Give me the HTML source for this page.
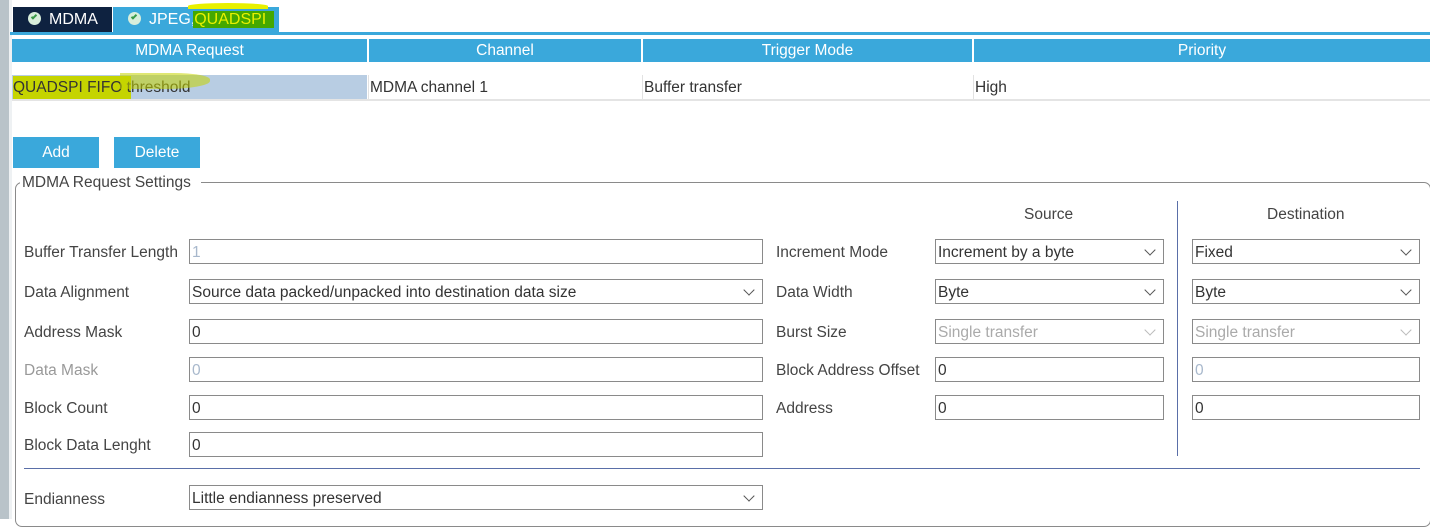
<!DOCTYPE html>
<html><head><meta charset="utf-8"><style>
*{box-sizing:border-box;margin:0;padding:0}
body{width:1430px;height:519px;overflow:hidden;background:#fff;font-family:"Liberation Sans",Arial,sans-serif;font-size:15.5px;color:#333;position:relative}
.a{position:absolute;white-space:nowrap}
.hd{position:absolute;top:39px;height:23px;background:#3aa8db;color:#fff;text-align:center;line-height:24px}
.cell{position:absolute;top:75px;height:25px;line-height:26px;padding-left:1px;border-left:1px solid #e2e2e2}
.lbl{position:absolute;color:#444;line-height:24px;margin-top:2px}
.in{position:absolute;height:25px;border:1px solid #8a8a8a;background:#fff;line-height:26px;padding-left:2px;color:#333}
.dis{color:#a8b8cc}
.sel::after{content:"";position:absolute;right:9px;top:6px;width:7px;height:7px;border-right:1px solid #555;border-bottom:1px solid #555;transform:rotate(45deg)}
.sel.d::after{border-color:#bbb}
.btn{position:absolute;top:137px;height:31px;background:#3aa8db;color:#fff;text-align:center;line-height:32px}
.ck{display:inline-block;width:13px;height:13px;border-radius:50%;background:#d8eedb;vertical-align:-1px;margin-right:8px;position:relative}
.ck span{position:absolute;left:3px;top:3px;width:6px;height:3px;border-left:2px solid #3a9a48;border-bottom:2px solid #3a9a48;transform:rotate(-45deg)}
</style></head><body>
<div class="a" style="left:0;top:0;width:9px;height:519px;background:#b9c3c9"></div>
<div class="a" style="left:9px;top:0;width:3px;height:519px;background:#eef1f3"></div>
<!-- tabs -->
<div class="a" style="left:13px;top:7px;width:99px;height:26px;background:#0e2240;color:#fff;line-height:26px;padding-left:15px;font-size:16px"><span class="ck"><span></span></span>MDMA</div>
<div class="a" style="left:113px;top:7px;width:166px;height:27px;background:#3aa8db;color:#fff;line-height:26px;padding-left:15px;font-size:16px"><span class="ck"><span></span></span>JPEG,<span style="background:#44a800;color:#e8f000;padding:0 8px 0 1px;margin-left:-2px">QUADSPI</span></div>
<div class="a" style="left:188px;top:3px;width:80px;height:6px;background:#e8f000;border-radius:50% 50% 0 0"></div>
<div class="a" style="left:10px;top:32px;width:1420px;height:3px;background:#3aa8db"></div>
<!-- header -->
<div class="hd" style="left:12px;width:355px">MDMA Request</div>
<div class="hd" style="left:369px;width:272px">Channel</div>
<div class="hd" style="left:643px;width:329px">Trigger Mode</div>
<div class="hd" style="left:974px;width:456px">Priority</div>
<div class="cell" style="left:12px;width:355px;background:#b8cde3;border-left:none;padding-left:1px"><span style="background:#c5d400;padding:3px 0 3px 0">QUADSPI FIFO t</span>hreshold</div>
<div class="a" style="left:120px;top:73px;width:90px;height:16px;background:#c5d400;border-radius:0 40% 50% 0;opacity:.55"></div>
<div class="cell" style="left:368px;width:274px">MDMA channel 1</div>
<div class="cell" style="left:642px;width:331px">Buffer transfer</div>
<div class="cell" style="left:973px;width:457px">High</div>
<div class="a" style="left:12px;top:99px;width:1418px;height:2px;background:#e4e4e4"></div>
<!-- buttons -->
<div class="btn" style="left:13px;width:86px">Add</div>
<div class="btn" style="left:114px;width:86px">Delete</div>
<!-- fieldset -->
<div class="a" style="left:15px;top:182px;width:1416px;height:345px;border:1px solid #8a8a8a;border-radius:7px"></div>
<div class="a" style="left:20px;top:172px;background:#fff;padding:0 10px 0 2px;color:#444;line-height:22px">MDMA Request Settings</div>
<div class="lbl" style="left:1024px;top:201px">Source</div>
<div class="lbl" style="left:1267px;top:201px">Destination</div>
<div class="a" style="left:1177px;top:201px;width:1px;height:255px;background:#5a6fa8"></div>

<div class="lbl" style="left:24px;top:239px">Buffer Transfer Length</div>
<div class="in dis" style="left:189px;top:239px;width:574px">1</div>
<div class="lbl" style="left:24px;top:279px">Data Alignment</div>
<div class="in sel" style="left:189px;top:279px;width:574px">Source data packed/unpacked into destination data size</div>
<div class="lbl" style="left:24px;top:319px">Address Mask</div>
<div class="in" style="left:189px;top:319px;width:574px">0</div>
<div class="lbl" style="left:24px;top:357px;color:#999">Data Mask</div>
<div class="in dis" style="left:189px;top:357px;width:574px">0</div>
<div class="lbl" style="left:24px;top:395px">Block Count</div>
<div class="in" style="left:189px;top:395px;width:574px">0</div>
<div class="lbl" style="left:24px;top:432px">Block Data Lenght</div>
<div class="in" style="left:189px;top:432px;width:574px">0</div>

<div class="lbl" style="left:776px;top:239px">Increment Mode</div>
<div class="in sel" style="left:935px;top:239px;width:229px">Increment by a byte</div>
<div class="in sel" style="left:1192px;top:239px;width:228px">Fixed</div>
<div class="lbl" style="left:776px;top:279px">Data Width</div>
<div class="in sel" style="left:935px;top:279px;width:229px">Byte</div>
<div class="in sel" style="left:1192px;top:279px;width:228px">Byte</div>
<div class="lbl" style="left:776px;top:319px">Burst Size</div>
<div class="in sel d" style="left:935px;top:319px;width:229px;color:#aaa">Single transfer</div>
<div class="in sel d" style="left:1192px;top:319px;width:228px;color:#aaa">Single transfer</div>
<div class="lbl" style="left:776px;top:357px">Block Address Offset</div>
<div class="in" style="left:935px;top:357px;width:229px">0</div>
<div class="in dis" style="left:1192px;top:357px;width:228px">0</div>
<div class="lbl" style="left:776px;top:395px">Address</div>
<div class="in" style="left:935px;top:395px;width:229px">0</div>
<div class="in" style="left:1192px;top:395px;width:228px">0</div>

<div class="a" style="left:24px;top:468px;width:1396px;height:1px;background:#5a6fa8"></div>
<div class="lbl" style="left:24px;top:486px">Endianness</div>
<div class="in sel" style="left:189px;top:485px;width:574px">Little endianness preserved</div>
</body></html>
